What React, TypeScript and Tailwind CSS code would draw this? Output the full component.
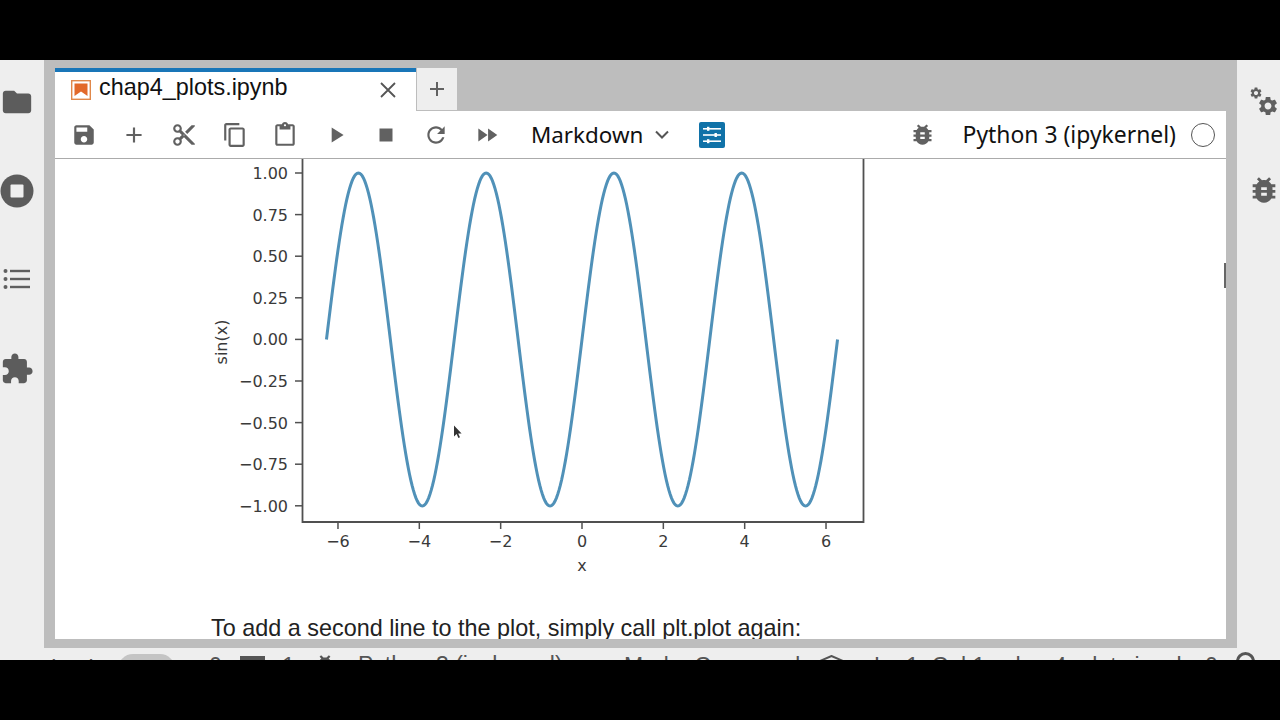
import React from "react";

const P = {
  save: "M17 3H5c-1.11 0-2 .9-2 2v14c0 1.1.89 2 2 2h14c1.1 0 2-.9 2-2V7l-4-4zm-5 16c-1.66 0-3-1.34-3-3s1.34-3 3-3 3 1.34 3 3-1.34 3-3 3zm3-10H5V5h10v4z",
  add: "M19 13h-6v6h-2v-6H5v-2h6V5h2v6h6v2z",
  cut: "M9.64 7.64c.23-.5.36-1.05.36-1.64 0-2.21-1.79-4-4-4S2 3.79 2 6s1.79 4 4 4c.59 0 1.14-.13 1.64-.36L10 12l-2.36 2.36C7.14 14.13 6.59 14 6 14c-2.21 0-4 1.79-4 4s1.79 4 4 4 4-1.79 4-4c0-.59-.13-1.14-.36-1.64L12 14l7 7h3v-1L9.64 7.64zM6 8c-1.1 0-2-.89-2-2s.9-2 2-2 2 .89 2 2-.9 2-2 2zm0 12c-1.1 0-2-.89-2-2s.9-2 2-2 2 .89 2 2-.9 2-2 2zm6-7.5c-.28 0-.5-.22-.5-.5s.22-.5.5-.5.5.22.5.5-.22.5-.5.5zM19 3l-6 6 2 2 7-7V3z",
  copy: "M16 1H4c-1.1 0-2 .9-2 2v14h2V3h12V1zm3 4H8c-1.1 0-2 .9-2 2v14c0 1.1.9 2 2 2h11c1.1 0 2-.9 2-2V7c0-1.1-.9-2-2-2zm0 16H8V7h11v14z",
  paste: "M19 2h-4.18C14.4.84 13.3 0 12 0c-1.3 0-2.4.84-2.82 2H5c-1.1 0-2 .9-2 2v16c0 1.1.9 2 2 2h14c1.1 0 2-.9 2-2V4c0-1.1-.9-2-2-2zm-7 0c.55 0 1 .45 1 1s-.45 1-1 1-1-.45-1-1 .45-1 1-1zm7 18H5V4h2v3h10V4h2v16z",
  run: "M8 5v14l11-7z",
  stop: "M6 6h12v12H6z",
  refresh: "M17.65 6.35C16.2 4.9 14.21 4 12 4c-4.42 0-7.99 3.58-7.99 8s3.57 8 7.99 8c3.73 0 6.84-2.55 7.73-6h-2.08c-.82 2.33-3.04 4-5.65 4-3.31 0-6-2.69-6-6s2.69-6 6-6c1.66 0 3.14.69 4.22 1.78L13 11h7V4l-2.35 2.35z",
  ff: "M4 18l8.5-6L4 6v12zm9-12v12l8.5-6L13 6z",
  bug: "M20 8h-2.81c-.45-.78-1.07-1.45-1.82-1.96L17 4.41 15.59 3l-2.17 2.17C12.96 5.06 12.49 5 12 5c-.49 0-.96.06-1.41.17L8.41 3 7 4.41l1.62 1.63C7.88 6.55 7.26 7.22 6.81 8H4v2h2.09c-.05.33-.09.66-.09 1v1H4v2h2v1c0 .34.04.67.09 1H4v2h2.81c1.04 1.79 2.97 3 5.19 3s4.15-1.21 5.19-3H20v-2h-2.09c.05-.33.09-.66.09-1v-1h2v-2h-2v-1c0-.34-.04-.67-.09-1H20V8zm-6 8h-4v-2h4v2zm0-4h-4v-2h4v2z",
  folder: "M10 4H4c-1.1 0-1.99.9-1.99 2L2 18c0 1.1.9 2 2 2h16c1.1 0 2-.9 2-2V8c0-1.1-.9-2-2-2h-8l-2-2z",
  ext: "M20.5 11H19V7c0-1.1-.9-2-2-2h-4V3.5C13 2.12 11.88 1 10.5 1S8 2.12 8 3.5V5H4c-1.1 0-1.99.9-1.99 2v3.8H3.5c1.49 0 2.7 1.21 2.7 2.7s-1.21 2.7-2.7 2.7H2V20c0 1.1.9 2 2 2h3.8v-1.5c0-1.49 1.21-2.7 2.7-2.7 1.49 0 2.7 1.21 2.7 2.7V22H17c1.1 0 2-.9 2-2v-4h1.5c1.38 0 2.5-1.12 2.5-2.5S21.88 11 20.5 11z",
  gear: "M19.14 12.94c.04-.3.06-.61.06-.94 0-.32-.02-.64-.07-.94l2.03-1.58c.18-.14.23-.41.12-.61l-1.92-3.32c-.12-.22-.37-.29-.59-.22l-2.39.96c-.5-.38-1.03-.7-1.62-.94l-.36-2.54c-.04-.24-.24-.41-.48-.41h-3.84c-.24 0-.43.17-.47.41l-.36 2.54c-.59.24-1.13.57-1.62.94l-2.39-.96c-.22-.08-.47 0-.59.22L2.74 8.87c-.12.21-.08.47.12.61l2.03 1.58c-.05.3-.09.63-.09.94s.02.64.07.94l-2.03 1.58c-.18.14-.23.41-.12.61l1.92 3.32c.12.22.37.29.59.22l2.39-.96c.5.38 1.03.7 1.62.94l.36 2.54c.05.24.24.41.48.41h3.84c.24 0 .44-.17.47-.41l.36-2.54c.59-.24 1.13-.56 1.62-.94l2.39.96c.22.08.47 0 .59-.22l1.92-3.32c.12-.22.07-.47-.12-.61l-2.01-1.58zM12 15.6c-1.98 0-3.6-1.62-3.6-3.6s1.62-3.6 3.6-3.6 3.6 1.62 3.6 3.6-1.62 3.6-3.6 3.6z",
};

function Icon({ d, className }: { d: string; className: string }) {
  return (
    <svg viewBox="0 0 24 24" className={className} fill="currentColor">
      <path d={d} />
    </svg>
  );
}

function Gears() {
  return (
    <svg viewBox="0 0 32 32" className="w-[32px] h-[32px] text-[#5f5f5f]" fill="currentColor">
      <g transform="translate(0.04,2.04) scale(0.58)"><path d={P.gear} /></g>
      <g transform="translate(7.6,10.6) scale(0.95)"><path d={P.gear} /></g>
    </svg>
  );
}

function TB({ d, ml, size = "w-[26px] h-[26px]" }: { d: string; ml: string; size?: string }) {
  return (
    <div className={`flex items-center justify-center w-[26px] ${ml}`}>
      <Icon d={d} className={`${size} text-[#616161]`} />
    </div>
  );
}

function Plot() {
  const X = (v: number) => 582 + v * 40.67;
  const Y = (v: number) => 339.5 - v * 166.5;
  const pts: string[] = [];
  for (let i = 0; i <= 400; i++) {
    const x = -2 * Math.PI + (i / 400) * 4 * Math.PI;
    pts.push(`${X(x).toFixed(2)},${Y(Math.sin(2 * x)).toFixed(2)}`);
  }
  const yt = ["1.00", "0.75", "0.50", "0.25", "0.00", "\u22120.25", "\u22120.50", "\u22120.75", "\u22121.00"];
  const xt = [-6, -4, -2, 0, 2, 4, 6];
  return (
    <svg width="900" height="420" viewBox="55 159 900 420" className="block" style={{ fontFamily: "'DejaVu Sans', sans-serif" }}>
      <polyline points={pts.join(" ")} fill="none" stroke="#5091b8" strokeWidth="3" />
      <path d="M302.5 140V522H863.5V140" fill="none" stroke="#505050" strokeWidth="1.8" />
      {yt.map((t, i) => {
        const y = 173 + i * 41.6;
        return (
          <g key={t}>
            <line x1="295" x2="302" y1={y} y2={y} stroke="#505050" strokeWidth="1.5" />
            <text x="288" y={y + 6} textAnchor="end" fontSize="16" fill="#3a3a3a">{t}</text>
          </g>
        );
      })}
      {xt.map((v) => (
        <g key={v}>
          <line x1={X(v)} x2={X(v)} y1="522" y2="529" stroke="#505050" strokeWidth="1.5" />
          <text x={X(v)} y="547" textAnchor="middle" fontSize="16" fill="#3a3a3a">{v < 0 ? `\u2212${-v}` : v}</text>
        </g>
      ))}
      <text x="582" y="571" textAnchor="middle" fontSize="16" fill="#3a3a3a">x</text>
      <text transform="translate(227,342) rotate(-90)" textAnchor="middle" fontSize="16" fill="#3a3a3a">sin(x)</text>
      <path d="M454 425.5v11l2.6-2.4 1.8 4 1.6-.8-1.8-3.8h3.4z" fill="#333" />
    </svg>
  );
}

export default function App() {
  return (
    <div className="w-[1280px] h-[720px] bg-black flex flex-col overflow-hidden" style={{ fontFamily: "'Liberation Sans', sans-serif" }}>
      <div className="h-[60px] shrink-0" />
      <div className="h-[600px] shrink-0 bg-[#eeeeee] flex flex-col overflow-hidden">
        <div className="h-[588px] shrink-0 flex">
          {/* left sidebar */}
          <div className="w-[44px] shrink-0 flex flex-col items-center text-[#5c5c5c]">
            <div className="h-[25px] shrink-0" />
            <Icon d={P.folder} className="w-[34px] h-[34px] -ml-[10px]" />
            <div className="h-[55px] shrink-0" />
            <svg viewBox="0 0 34 34" className="w-[34px] h-[34px] -ml-[10px]">
              <circle cx="17" cy="17" r="16.5" fill="#5c5c5c" />
              <rect x="10.5" y="10.5" width="13" height="13" rx="1" fill="#f0f0f0" />
            </svg>
            <div className="h-[60px] shrink-0" />
            <svg viewBox="0 0 28 22" className="w-[28px] h-[22px] -ml-[10px]" fill="#5f5f5f">
              <circle cx="2.5" cy="3" r="2" /><circle cx="2.5" cy="11" r="2" /><circle cx="2.5" cy="19" r="2" />
              <rect x="7" y="1.8" width="20" height="2.4" /><rect x="7" y="9.8" width="20" height="2.4" /><rect x="7" y="17.8" width="20" height="2.4" />
            </svg>
            <div className="h-[62px] shrink-0" />
            <Icon d={P.ext} className="w-[34px] h-[34px] -ml-[10px]" />
          </div>
          {/* main */}
          <div className="w-[1193px] shrink-0 bg-[#bdbdbd] pl-[11px] pr-[11px] pt-[8px] pb-[9px] flex flex-col">
            <div className="h-[43px] shrink-0 flex items-stretch">
              <div className="w-[361px] bg-white border-t-[4px] border-[#1976b8] flex items-center">
                <svg viewBox="0 0 20 20" className="w-[20px] h-[20px] ml-[16px] -mt-[4px] shrink-0">
                  <rect x="0.7" y="0.7" width="18.6" height="18.6" fill="#fff" stroke="#e0884a" strokeWidth="1.4" />
                  <path d="M3.5 3.5h13v12.5L10 11.5 3.5 16z" fill="#e2692a" />
                </svg>
                <span className="ml-[8px] text-[23.4px] leading-none text-[#111] -mt-[7px]">chap4_plots.ipynb</span>
                <div className="flex-1" />
                <svg viewBox="0 0 16 16" className="w-[16px] h-[16px] mr-[20px] -mt-[3px]" stroke="#555" strokeWidth="1.8">
                  <path d="M1 1l14 14M15 1L1 15" />
                </svg>
              </div>
              <div className="w-[41px] bg-[#eeeeee] border-l border-b border-[#bdbdbd] flex items-center justify-center">
                <Icon d={P.add} className="w-[24px] h-[24px] text-[#616161]" />
              </div>
            </div>
            <div className="h-[48px] shrink-0 bg-white border-b-[1.5px] border-[#ababab] flex items-center text-[#111]" style={{ fontFamily: "'Noto Sans', sans-serif" }}>
              <TB d={P.save} ml="ml-[16px]" />
              <TB d={P.add} ml="ml-[24px]" />
              <TB d={P.cut} ml="ml-[24px]" />
              <TB d={P.copy} ml="ml-[25px]" />
              <TB d={P.paste} ml="ml-[24px]" />
              <TB d={P.run} ml="ml-[25px]" />
              <TB d={P.stop} ml="ml-[24px]" />
              <TB d={P.refresh} ml="ml-[24px]" />
              <TB d={P.ff} ml="ml-[25px]" />
              <span className="ml-[31px] text-[22.4px] leading-none mt-[2px]">Markdown</span>
              <svg viewBox="0 0 14 10" className="w-[14px] h-[10px] ml-[12px]" fill="none" stroke="#555" strokeWidth="2">
                <path d="M1 1.5l6 6 6-6" />
              </svg>
              <div className="ml-[30px] w-[26px] h-[26px] rounded-[2px] bg-[#1072a8] flex items-center justify-center">
                <svg viewBox="0 0 20 20" className="w-[20px] h-[20px]" fill="#fff">
                  <rect x="1" y="3" width="18" height="1.6" /><rect x="1" y="9.2" width="18" height="1.6" /><rect x="1" y="15.4" width="18" height="1.6" />
                  <rect x="5" y="1.8" width="2.4" height="4" /><rect x="12.5" y="8" width="2.4" height="4" /><rect x="5" y="14.2" width="2.4" height="4" />
                </svg>
              </div>
              <div className="flex-1" />
              <Icon d={P.bug} className="w-[27px] h-[27px] text-[#616161] mr-[27px]" />
              <span className="text-[22.9px] leading-none mt-[2px]">Python 3 (ipykernel)</span>
              <div className="ml-[15px] mr-[11px] w-[24px] h-[24px] rounded-full border-[1.5px] border-[#555]" />
            </div>
            <div className="flex-1 bg-white relative overflow-hidden">
              <Plot />
              <p className="absolute left-[156px] top-[455px] text-[23.4px] leading-[28px] text-[#222] whitespace-nowrap">To add a second line to the plot, simply call plt.plot again:</p>
              <div className="absolute right-0 top-[104px] w-[2px] h-[25px] bg-[#666]" />
            </div>
          </div>
          {/* right sidebar */}
          <div className="flex-1 flex flex-col items-start text-[#5f5f5f] pt-[24px] pl-[12px]">
            <Gears />
            <div className="h-[57px] shrink-0" />
            <Icon d={P.bug} className="w-[34px] h-[34px] -ml-[2px] shrink-0" />
          </div>
        </div>
        {/* status bar, clipped by the black letterbox */}
        <div className="flex items-start text-[#555] text-[23px] leading-none whitespace-nowrap h-[40px]">
          <span className="ml-[36px] w-[82px] shrink-0 mt-[10px]">Simple</span>
          <div className="w-[57px] h-[30px] shrink-0 rounded-full bg-[#c4c4c4] mt-[6px]" />
          <span className="ml-[34px] w-[31px] shrink-0 mt-[7px]">0</span>
          <div className="w-[25px] h-[20px] shrink-0 bg-[#555] mt-[8px]" />
          <span className="ml-[17px] w-[34px] shrink-0 mt-[7px]">1</span>
          <Icon d={P.bug} className="w-[26px] h-[26px] -ml-[4px] mr-[20px] shrink-0 mt-[4px]" />
          <span className="w-[266px] shrink-0 mt-[6px]">Python 3 (ipykernel)</span>
          <span className="w-[195px] shrink-0 mt-[7px]">Mode: Command</span>
          <svg viewBox="0 0 25 14" className="w-[25px] h-[14px] shrink-0 mt-[7px]" fill="none" stroke="#555" strokeWidth="2">
            <path d="M1 13V6L12.5 1 24 6v7" />
          </svg>
          <span className="ml-[30px] w-[130px] shrink-0 mt-[7px]">Ln 1, Col 1</span>
          <span className="w-[201px] shrink-0 mt-[7px]">chap4_plots.ipynb</span>
          <span className="w-[31px] shrink-0 mt-[7px]">0</span>
          <div className="w-[19px] h-[30px] shrink-0 rounded-full border-[3px] border-[#555] mt-[4px]" />
        </div>
      </div>
      <div className="flex-1" />
    </div>
  );
}
